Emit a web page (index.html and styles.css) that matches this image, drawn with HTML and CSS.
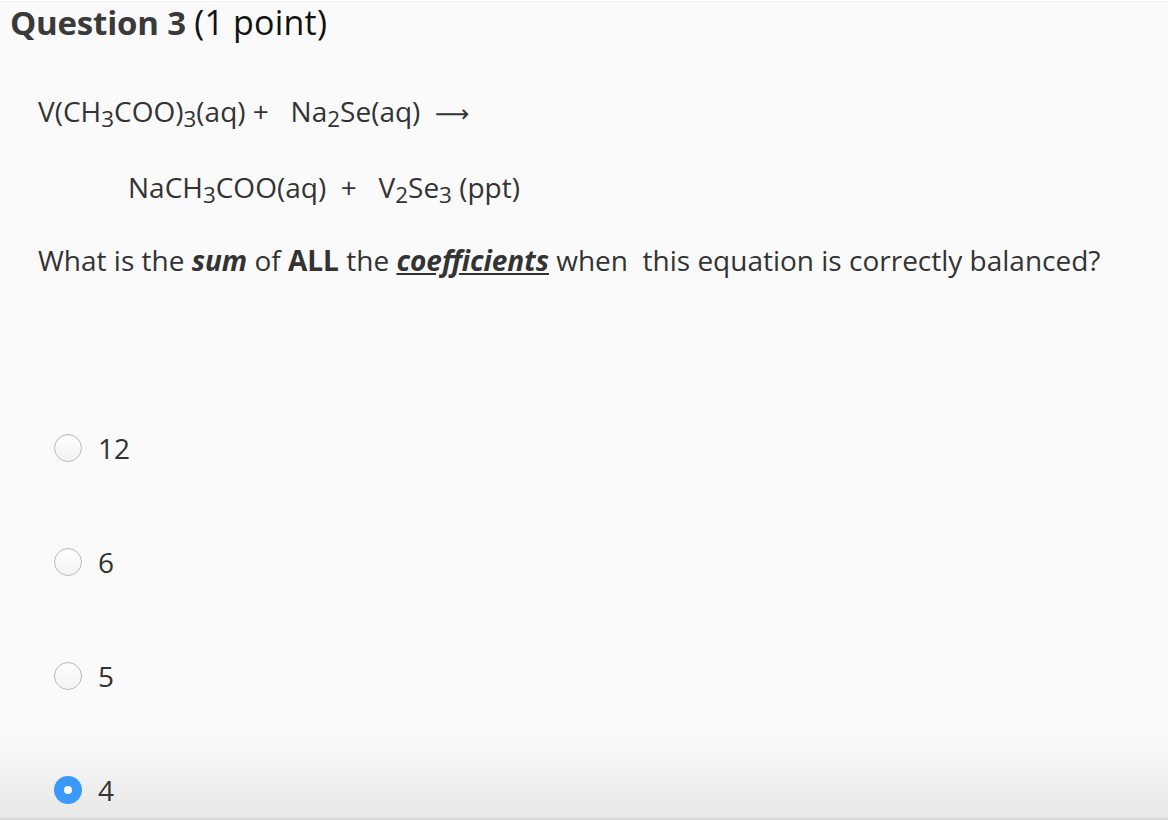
FILE: index.html
```html
<!DOCTYPE html>
<html>
<head>
<meta charset="utf-8">
<link rel="stylesheet" href="styles.css">
</head>
<body>
<div class="topline"></div>
<div class="page">
  <h2 class="title"><span class="qname">Question 3</span> <span class="pts">(1 point)</span></h2>
  <div class="eq eq1">V(CH<sub>3</sub>COO)<sub>3</sub>(aq) +&nbsp;&nbsp; Na<sub>2</sub>Se(aq)&nbsp; <span class="arrow">⟶</span></div>
  <div class="eq eq2">NaCH<sub>3</sub>COO(aq)&nbsp; +&nbsp;&nbsp; V<sub>2</sub>Se<sub>3</sub> (ppt)</div>
  <p class="question">What is the <b><i>sum</i></b> of <b>ALL</b> the <b><i><u>coefficients</u></i></b> when&nbsp; this equation is correctly balanced?</p>
  <div class="answers">
    <label class="opt"><span class="radio"></span><span class="val">12</span></label>
    <label class="opt"><span class="radio"></span><span class="val">6</span></label>
    <label class="opt"><span class="radio"></span><span class="val">5</span></label>
    <label class="opt"><span class="radio checked"></span><span class="val">4</span></label>
  </div>
</div>
</body>
</html>
```
FILE: styles.css
```css
html, body { margin: 0; padding: 0; }
body {
  width: 1168px;
  height: 820px;
  overflow: hidden;
  background: linear-gradient(to bottom, #fafafa 0, #fafafa 735px, #e8e8e8 817px, #d8d8d8 818px);
  font-family: "Open Sans", "Noto Sans", sans-serif;
  color: #2d2d2d;
}
.topline {
  height: 1px;
  border-bottom: 1px solid #f0f0f0;
  background: #fff;
}
.page { padding: 0 0 0 10px; }
.title {
  margin: 0;
  padding-top: 4px;
  font-size: 33px;
  font-weight: 400;
  line-height: 33px;
  color: #111;
  letter-spacing: -0.2px;
}
.qname { font-weight: 700; color: #3a3a3a; }
.pts { font-size: 34px; letter-spacing: 0.2px; }
.eq {
  font-size: 28px;
  line-height: 36px;
  color: #333;
}
.eq sub { font-size: 0.8em; vertical-align: -0.22em; line-height: 0; }
.arrow { font-family: "DejaVu Sans", sans-serif; font-size: 24px; }
.eq1 { margin: 54px 0 0 28px; }
.eq2 { margin: 37px 0 0 118px; }
.question {
  margin: 37px 0 0 28px;
  font-size: 28px;
  line-height: 36px;
  color: #333;
}
.answers {
  margin: 152px 0 0 44px;
  display: flex;
  flex-direction: column;
  gap: 78px;
}
.opt {
  display: flex;
  align-items: center;
  gap: 16px;
  height: 36px;
  font-size: 28px;
  color: #333;
}
.radio {
  width: 28px;
  height: 28px;
  box-sizing: border-box;
  border-radius: 50%;
  border: 1px solid #bbb;
  background: linear-gradient(#fff, #f2f2f2);
  box-shadow: inset 0 1px 1px rgba(0,0,0,0.05);
}
.radio.checked {
  border: 10px solid #3b99fc;
  background: #fff;
  box-shadow: none;
}
```
